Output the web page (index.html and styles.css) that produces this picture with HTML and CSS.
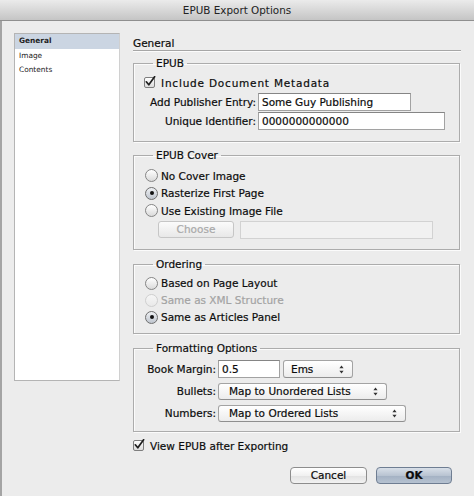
FILE: index.html
```html
<!DOCTYPE html>
<html>
<head>
<meta charset="utf-8">
<title>EPUB Export Options</title>
<link rel="stylesheet" href="styles.css">
</head>
<body>
<div class="window">
  <div class="titlebar">EPUB Export Options</div>
  <div class="content">
    <ul class="sidebar">
      <li class="item selected">General</li>
      <li class="item">Image</li>
      <li class="item">Contents</li>
    </ul>
    <div class="main">
      <div class="heading">General</div>

      <fieldset class="group g-epub">
        <legend>EPUB</legend>
        <div class="row check-row">
          <span class="cb"><svg viewBox="0 0 12 12" width="12" height="12"><path d="M2.3 5.8 L4.8 8.8 L10.6 0.8" fill="none" stroke="#1e1e1e" stroke-width="1.7" stroke-linecap="round" stroke-linejoin="round"/></svg></span>
          <span class="wide">Include Document Metadata</span>
        </div>
        <div class="form-grid epub-grid">
          <span class="lbl">Add Publisher Entry:</span>
          <span class="field w-pub">Some Guy Publishing</span>
          <span class="lbl">Unique Identifier:</span>
          <span class="field w-uid">0000000000000</span>
        </div>
      </fieldset>

      <fieldset class="group g-cover">
        <legend>EPUB Cover</legend>
        <div class="row radio-row"><span class="radio"></span><span>No Cover Image</span></div>
        <div class="row radio-row"><span class="radio on"></span><span>Rasterize First Page</span></div>
        <div class="row radio-row"><span class="radio"></span><span>Use Existing Image File</span></div>
        <div class="choose-row">
          <span class="btn-choose">Choose</span>
          <span class="field-disabled"></span>
        </div>
      </fieldset>

      <fieldset class="group g-order">
        <legend>Ordering</legend>
        <div class="row radio-row o"><span class="radio"></span><span>Based on Page Layout</span></div>
        <div class="row radio-row o disabled"><span class="radio"></span><span>Same as XML Structure</span></div>
        <div class="row radio-row o"><span class="radio on"></span><span>Same as Articles Panel</span></div>
      </fieldset>

      <fieldset class="group g-format">
        <legend>Formatting Options</legend>
        <div class="form-grid fmt-grid">
          <span class="lbl">Book Margin:</span>
          <span class="pair">
            <span class="field w-margin">0.5</span>
            <span class="popup w-ems"><span>Ems</span><svg class="arrows" width="5" height="9" viewBox="0 0 5 9"><path d="M2.5 0.5 L4.6 3.3 L0.4 3.3 Z M2.5 8.5 L4.6 5.7 L0.4 5.7 Z" fill="#333"/></svg></span>
          </span>
          <span class="lbl">Bullets:</span>
          <span class="popup w-bul"><span>Map to Unordered Lists</span><svg class="arrows" width="5" height="9" viewBox="0 0 5 9"><path d="M2.5 0.5 L4.6 3.3 L0.4 3.3 Z M2.5 8.5 L4.6 5.7 L0.4 5.7 Z" fill="#333"/></svg></span>
          <span class="lbl">Numbers:</span>
          <span class="popup w-num"><span>Map to Ordered Lists</span><svg class="arrows" width="5" height="9" viewBox="0 0 5 9"><path d="M2.5 0.5 L4.6 3.3 L0.4 3.3 Z M2.5 8.5 L4.6 5.7 L0.4 5.7 Z" fill="#333"/></svg></span>
        </div>
      </fieldset>

      <div class="row check-row view-row">
        <span class="cb"><svg viewBox="0 0 12 12" width="12" height="12"><path d="M2.3 5.8 L4.8 8.8 L10.6 0.8" fill="none" stroke="#1e1e1e" stroke-width="1.7" stroke-linecap="round" stroke-linejoin="round"/></svg></span>
        <span>View EPUB after Exporting</span>
      </div>

      <div class="buttons">
        <span class="btn cancel">Cancel</span>
        <span class="btn ok">OK</span>
      </div>
    </div>
  </div>
</div>
</body>
</html>
```
FILE: styles.css
```css
html, body {
  margin: 0;
  padding: 0;
}
body {
  width: 474px;
  height: 496px;
  overflow: hidden;
  background: #ececec;
  font-family: "DejaVu Sans", "Liberation Sans", sans-serif;
  font-size: 10.5px;
  color: #0c0c0c;
}
.window {
  height: 496px;
  display: flex;
  flex-direction: column;
}
.titlebar {
  height: 20px;
  line-height: 21px;
  border-bottom: 1px solid #8f8f8f;
  background: linear-gradient(#ebebeb, #c5c5c5);
  text-align: center;
  font-size: 10.4px;
  color: #222;
}
.content {
  flex: 1;
  display: flex;
  align-items: flex-start;
  border-left: 2px solid #a4a4a4;
}
.sidebar {
  list-style: none;
  box-sizing: border-box;
  margin: 12px 0 0 12px;
  padding: 0;
  width: 106px;
  height: 348px;
  background: #fff;
  border: 1px solid #b4b4b4;
  border-right-color: #d0d0d0;
}
.item {
  height: 14.5px;
  line-height: 14.5px;
  padding-left: 4px;
  font-size: 7.4px;
  color: #222;
}
.item.selected {
  background: #cbd5e2;
  font-weight: bold;
}
.main {
  margin-left: 13px;
  width: 327px;
  -webkit-text-stroke: 0.2px currentColor;
}
.heading {
  margin-top: 15px;
  height: 14px;
  line-height: 14px;
  width: 328px;
  border-bottom: 1px solid #a6a6a6;
  box-shadow: 0 1px 0 #fbfbfb;
}
.group {
  margin: 0;
  padding: 0 0 0 10px;
  min-width: 0;
  border: 1px solid #acacac;
  box-shadow: 1px 1px 0 #fbfbfb, inset 1px 1px 0 #fbfbfb;
}
.group legend {
  padding: 0 3px;
  margin-left: 9px;
  line-height: 13px;
  height: 13px;
}
.g-epub { margin-top: 6px; padding-top: 3px; padding-bottom: 11px; }
.g-cover { margin-top: 7px; padding-top: 5px; padding-bottom: 10px; }
.g-order { margin-top: 8px; padding-top: 4px; padding-bottom: 7px; }
.g-format { margin-top: 8px; padding-top: 5.5px; padding-bottom: 9px; }

.row {
  display: flex;
  align-items: center;
}
.wide { letter-spacing: 0.8px; }
.check-row { height: 19px; }
.radio-row { height: 17.5px; }
.radio-row.o { height: 17px; }

.cb {
  box-sizing: border-box;
  width: 11px;
  height: 11px;
  margin-right: 6px;
  border: 1px solid #7e7e7e;
  border-radius: 2px;
  background: linear-gradient(#ffffff, #dcdcdc);
  display: flex;
  align-items: center;
  justify-content: center;
  overflow: visible;
}
.cb svg { flex: none; margin: -2px -1px 0 0; }

.radio {
  box-sizing: border-box;
  width: 13px;
  height: 13px;
  margin-left: 1px;
  margin-right: 3px;
  border-radius: 50%;
  border: 1px solid #858585;
  background: linear-gradient(#ffffff, #dadada);
  display: flex;
  align-items: center;
  justify-content: center;
}
.radio.on {
  background: linear-gradient(#eef0f3, #bfc5ce);
  border-color: #6f6f6f;
}
.radio.on::after {
  content: "";
  width: 4px;
  height: 4px;
  border-radius: 50%;
  background: #111;
}
.disabled { color: #a3a3a3; }
.disabled .radio {
  border-color: #cfcfcf;
  background: linear-gradient(#f6f6f6, #e9e9e9);
}

.form-grid {
  display: grid;
  column-gap: 2px;
  align-items: center;
}
.epub-grid {
  grid-template-columns: 112px auto;
  grid-auto-rows: 19px;
}
.fmt-grid {
  grid-template-columns: 72px auto;
  grid-auto-rows: 18px;
  row-gap: 4px;
}
.lbl {
  text-align: right;
  white-space: nowrap;
}
.field {
  box-sizing: border-box;
  display: block;
  height: 18px;
  line-height: 16px;
  padding: 0 3px;
  background: #fff;
  border: 1px solid #a2a2a2;
  border-top-color: #858585;
  white-space: nowrap;
}
.w-pub { width: 153px; }
.w-uid { width: 187px; }
.w-margin { width: 62px; }

.pair {
  display: flex;
  gap: 3px;
}
.popup {
  box-sizing: border-box;
  height: 18px;
  display: flex;
  align-items: center;
  justify-content: space-between;
  padding: 0 8px 0 10px;
  border: 1px solid #a3a3a3;
  border-bottom-color: #8f8f8f;
  border-radius: 3px;
  background: linear-gradient(#ffffff, #ececec);
  white-space: nowrap;
}
.popup.w-ems { width: 70px; padding-left: 7px; }
.w-bul { width: 169px; height: 17px; }
.w-num { width: 188px; height: 17px; }
.arrows { flex: none; }

.choose-row {
  display: flex;
  gap: 6px;
  margin-top: 1px;
  padding-left: 14px;
}
.btn-choose {
  box-sizing: border-box;
  width: 76px;
  height: 17px;
  line-height: 15px;
  text-align: center;
  color: #a9a9a9;
  border: 1px solid #c6c6c6;
  border-radius: 3px;
  background: linear-gradient(#fbfbfb, #e8e8e8);
}
.field-disabled {
  box-sizing: border-box;
  width: 193px;
  height: 18px;
  border: 1px solid #d2d2d2;
  background: #f1f1f1;
}

.view-row {
  height: 17px;
  margin-top: 5px;
}

.buttons {
  display: flex;
  justify-content: flex-end;
  gap: 9px;
  margin-top: 13px;
  padding-right: 8px;
}
.btn {
  box-sizing: border-box;
  height: 17px;
  line-height: 15px;
  text-align: center;
  border-radius: 4px;
}
.cancel {
  width: 77px;
  border: 1px solid #8d8d8d;
  background: linear-gradient(#ffffff, #f1f1f1 50%, #e2e2e2 51%, #f2f2f2);
}
.ok {
  width: 76px;
  font-weight: bold;
  border: 1px solid #6e7d92;
  background: linear-gradient(#d8dfe8, #b9c4d2 50%, #a3b1c3 51%, #b6c2d1);
}
```
